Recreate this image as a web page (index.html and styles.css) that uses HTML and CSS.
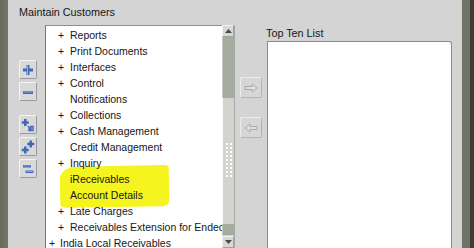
FILE: index.html
```html
<!DOCTYPE html>
<html lang="en">
<head>
    <meta charset="UTF-8">
    <title>Maintain Customers</title>
    <link rel="stylesheet" href="styles.css">
</head>
<body>
    <div class="frame">
        <div class="edge-left"></div>

        <div class="panel">
            <div class="title">Maintain Customers</div>

            <div class="content">
                <!-- кнопки дерева -->
                <div class="tools">
                    <button class="tool">
                        <svg width="12" height="12" viewBox="0 0 12 12">
                            <rect x="4.5" y="1" width="3" height="10" fill="#3f68b8"/>
                            <rect x="1" y="4.5" width="10" height="3" fill="#3f68b8"/>
                            <rect x="5" y="1.5" width="1" height="9" fill="#8fb0ea"/>
                        </svg>
                    </button>
                    <button class="tool">
                        <svg width="12" height="12" viewBox="0 0 12 12">
                            <rect x="1" y="5" width="10" height="3" fill="#3f68b8"/>
                            <rect x="1.5" y="5.5" width="9" height="1" fill="#8fb0ea"/>
                        </svg>
                    </button>
                    <button class="tool gap">
                        <svg width="14" height="14" viewBox="0 0 14 14">
                            <rect x="3" y="1" width="2.5" height="7" fill="#3f68b8"/>
                            <rect x="0.75" y="3.25" width="7" height="2.5" fill="#3f68b8"/>
                            <path d="M7 8 L10 11 L10 8.5 L12 8.5 L12 12.5 L8 12.5 L8 11 L10 11" fill="none" stroke="#3f68b8" stroke-width="1.4"/>
                        </svg>
                    </button>
                    <button class="tool">
                        <svg width="14" height="14" viewBox="0 0 14 14">
                            <rect x="8.5" y="0.5" width="2.5" height="7" fill="#3f68b8"/>
                            <rect x="6.25" y="2.75" width="7" height="2.5" fill="#3f68b8"/>
                            <rect x="3" y="6.5" width="2.5" height="7" fill="#3f68b8"/>
                            <rect x="0.75" y="8.75" width="7" height="2.5" fill="#3f68b8"/>
                        </svg>
                    </button>
                    <button class="tool">
                        <svg width="14" height="14" viewBox="0 0 14 14">
                            <rect x="2" y="3" width="8" height="2.5" fill="#3f68b8"/>
                            <rect x="4.5" y="8.5" width="8" height="2.5" fill="#3f68b8"/>
                            <rect x="2.5" y="3.5" width="7" height="0.8" fill="#8fb0ea"/>
                            <rect x="5" y="9" width="7" height="0.8" fill="#8fb0ea"/>
                        </svg>
                    </button>
                </div>

                <div class="tree">
                    <div class="marker"></div>
                    <ul class="nodes">
                        <li class="child"><span class="sign">+</span>Reports</li>
                        <li class="child"><span class="sign">+</span>Print Documents</li>
                        <li class="child"><span class="sign">+</span>Interfaces</li>
                        <li class="child"><span class="sign">+</span>Control</li>
                        <li class="child"><span class="sign"></span>Notifications</li>
                        <li class="child"><span class="sign">+</span>Collections</li>
                        <li class="child"><span class="sign">+</span>Cash Management</li>
                        <li class="child"><span class="sign"></span>Credit Management</li>
                        <li class="child"><span class="sign">+</span>Inquiry</li>
                        <li class="child"><span class="sign"></span>iReceivables</li>
                        <li class="child"><span class="sign"></span>Account Details</li>
                        <li class="child"><span class="sign">+</span>Late Charges</li>
                        <li class="child"><span class="sign">+</span>Receivables Extension for Endeca</li>
                        <li class="root"><span class="sign">+</span>India Local Receivables</li>
                    </ul>
                </div>

                <div class="vscroll">
                    <div class="sb-btn">
                        <svg width="7" height="4" viewBox="0 0 7 4"><path d="M0 4 L3.5 0 L7 4 Z" fill="#4a4a4a"/></svg>
                    </div>
                    <div class="sb-thumb"></div>
                    <div class="sb-track">
                        <div class="grip"></div>
                    </div>
                    <div class="sb-thumb low"></div>
                    <div class="sb-btn">
                        <svg width="7" height="4" viewBox="0 0 7 4"><path d="M0 0 L3.5 4 L7 0 Z" fill="#4a4a4a"/></svg>
                    </div>
                </div>

                <div class="moves">
                    <button class="move">
                        <svg width="14" height="10" viewBox="0 0 14 10">
                            <path d="M1 3.5 H8 V1 L13 5 L8 9 V6.5 H1 Z" fill="#dedede" stroke="#a9a9a9" stroke-width="1"/>
                        </svg>
                    </button>
                    <button class="move second">
                        <svg width="14" height="10" viewBox="0 0 14 10">
                            <path d="M13 3.5 H6 V1 L1 5 L6 9 V6.5 H13 Z" fill="#dedede" stroke="#a9a9a9" stroke-width="1"/>
                        </svg>
                    </button>
                </div>

                <div class="top-ten">
                    <div class="label">Top Ten List</div>
                    <div class="list"></div>
                </div>
            </div>
        </div>

        <div class="edge-right"></div>
    </div>
</body>
</html>
```

FILE: styles.css
```css
html, body {
    margin: 0;
    padding: 0;
    height: 248px;
    overflow: hidden;
}

body {
    font-family: 'Liberation Sans', Arial, sans-serif;
    font-size: 10.5px;
    color: #161616;
}

.frame {
    display: flex;
    height: 248px;
}

.edge-left {
    width: 8px;
    background: linear-gradient(90deg, #666b5b, #737968);
}

.edge-right {
    width: 8px;
    background: #6f7564;
    border-right: 4px solid #3a3e35;
}

.panel {
    flex: 1;
    background: #d4d4d4;
    display: flex;
    flex-direction: column;
}

.title {
    height: 25px;
    box-sizing: border-box;
    padding: 6px 0 0 11px;
    line-height: 12px;
    font-size: 10.8px;
}

.content {
    flex: 1;
    display: flex;
    min-height: 0;
}

/* Кнопки слева */
.tools {
    width: 37px;
    box-sizing: border-box;
    padding: 35px 0 0 11px;
    display: flex;
    flex-direction: column;
}

.tool {
    width: 18px;
    height: 19px;
    padding: 0;
    margin: 0 0 3px 0;
    background: #d9d9d9;
    border: 1px solid;
    border-color: #f4f4f4 #9a9a9a #9a9a9a #f4f4f4;
    border-radius: 2px;
    display: flex;
    align-items: center;
    justify-content: center;
}

.tool.gap {
    margin-top: 11px;
}

/* Дерево */
.tree {
    width: 177px;
    box-sizing: border-box;
    background: #fff;
    border-left: 1px solid #7a7a7a;
    border-top: 1px solid #8e8e8e;
    position: relative;
    overflow: hidden;
}

.marker {
    position: absolute;
    left: 14px;
    top: 140px;
    width: 109px;
    height: 41px;
    background: #f6f41e;
    border-radius: 16px 4px 6px 5px / 12px 3px 6px 4px;
    transform: rotate(-1deg);
}

.nodes {
    list-style: none;
    margin: 0;
    padding: 1px 0 0 0;
    position: relative;
}

.nodes li {
    height: 16px;
    line-height: 16px;
    white-space: nowrap;
    display: flex;
}

.nodes .sign {
    flex: none;
}

.nodes .child {
    padding-left: 12px;
}

.nodes .child .sign {
    width: 12px;
}

.nodes .root {
    padding-left: 3px;
}

.nodes .root .sign {
    width: 11px;
}

/* Полоса прокрутки */
.vscroll {
    width: 12px;
    display: flex;
    flex-direction: column;
    background: #cfd0cc;
    border-right: 1px solid #a6a6a6;
}

.sb-btn {
    display: flex;
    align-items: center;
    justify-content: center;
    background: #d8d9d5;
    border: 1px solid;
    border-color: #f2f2f2 #9fa39a #9fa39a #f2f2f2;
    box-sizing: border-box;
    flex: none;
    height: 12px;
}

.sb-thumb {
    height: 61px;
    background: #a6ad9f;
    border-left: 1px solid #c4c9bf;
    flex: none;
}

.sb-thumb.low {
    height: 11px;
    margin-bottom: 1px;
}

.sb-track {
    flex: 1;
    background: #d3d4d0;
    border-left: 1px solid #fafafa;
    padding-top: 44px;
}

.grip {
    width: 8px;
    height: 35px;
    margin-left: 2px;
    background-image: radial-gradient(circle, #ffffff 0.9px, transparent 1.2px);
    background-size: 4px 4px;
}

/* Кнопки перемещения */
.moves {
    width: 32px;
    box-sizing: border-box;
    padding: 52px 0 0 5px;
    display: flex;
    flex-direction: column;
}

.move {
    width: 22px;
    height: 21px;
    padding: 0;
    background: #d6d6d6;
    border: 1px solid;
    border-color: #ececec #b3b3b3 #b3b3b3 #ececec;
    border-radius: 2px;
    display: flex;
    align-items: center;
    justify-content: center;
}

.move.second {
    margin-top: 19px;
}

/* Правый список */
.top-ten {
    width: 185px;
    margin-right: 10px;
    display: flex;
    flex-direction: column;
}

.label {
    height: 16px;
    line-height: 16px;
    margin-left: -1px;
    font-size: 10.8px;
}

.list {
    flex: 1;
    background: #fff;
    border: 1px solid #8c8c8c;
    border-bottom: none;
    border-top-right-radius: 3px;
}
```
